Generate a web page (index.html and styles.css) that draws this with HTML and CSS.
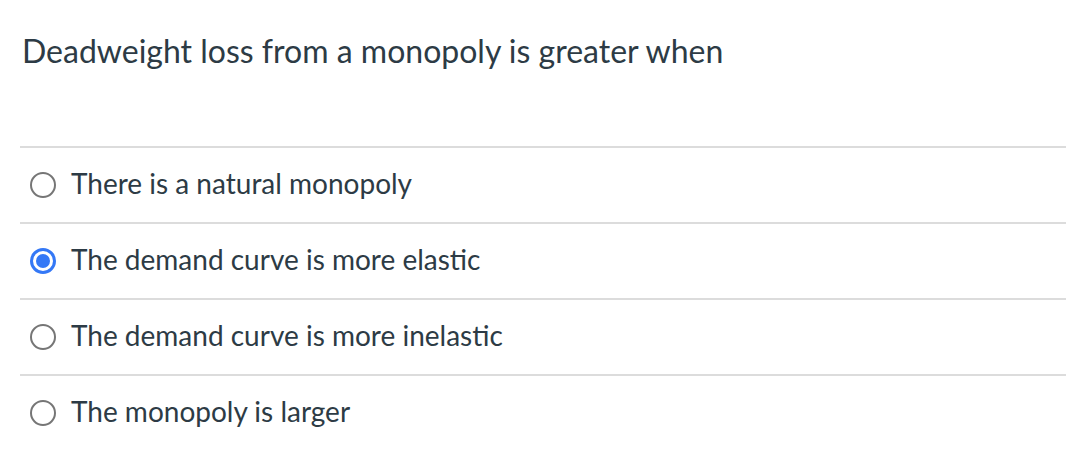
FILE: index.html
```html
<!DOCTYPE html>
<html>
<head>
<meta charset="utf-8">
<link rel="stylesheet" href="styles.css">
</head>
<body>
<div class="question">
  <div class="prompt">Deadweight loss from a monopoly is greater when</div>
  <div class="answers">
    <div class="answer"><span class="radio"></span><span class="label">There is a natural monopoly</span></div>
    <div class="answer"><span class="radio checked"></span><span class="label">The demand curve is more elastic</span></div>
    <div class="answer"><span class="radio"></span><span class="label">The demand curve is more inelastic</span></div>
    <div class="answer"><span class="radio"></span><span class="label">The monopoly is larger</span></div>
  </div>
</div>
</body>
</html>
```
FILE: styles.css
```css
html, body {
  margin: 0;
  padding: 0;
  background: #ffffff;
}
body {
  font-family: Lato, "Open Sans", sans-serif;
  color: #2d3b45;
}
.question {
  padding: 0 24px 0 20px;
}
.prompt {
  font-size: 32px;
  line-height: 40px;
  padding: 31px 0 0 2px;
  height: 146px;
  box-sizing: border-box;
}
.answers {
  display: flex;
  flex-direction: column;
}
.answer {
  display: flex;
  align-items: center;
  gap: 15px;
  height: 74px;
  border-top: 2px solid #dcdcdc;
  padding-left: 10px;
}
.radio {
  width: 26px;
  height: 26px;
  box-sizing: border-box;
  border: 2px solid #767676;
  border-radius: 50%;
  flex: none;
  position: relative;
}
.radio.checked {
  border: 3px solid #3478f6;
}
.radio.checked::after {
  content: "";
  position: absolute;
  left: 3px;
  top: 3px;
  width: 14px;
  height: 14px;
  border-radius: 50%;
  background: #3478f6;
}
.label {
  font-size: 28px;
  line-height: 34px;
  margin-top: -4px;
}
```
